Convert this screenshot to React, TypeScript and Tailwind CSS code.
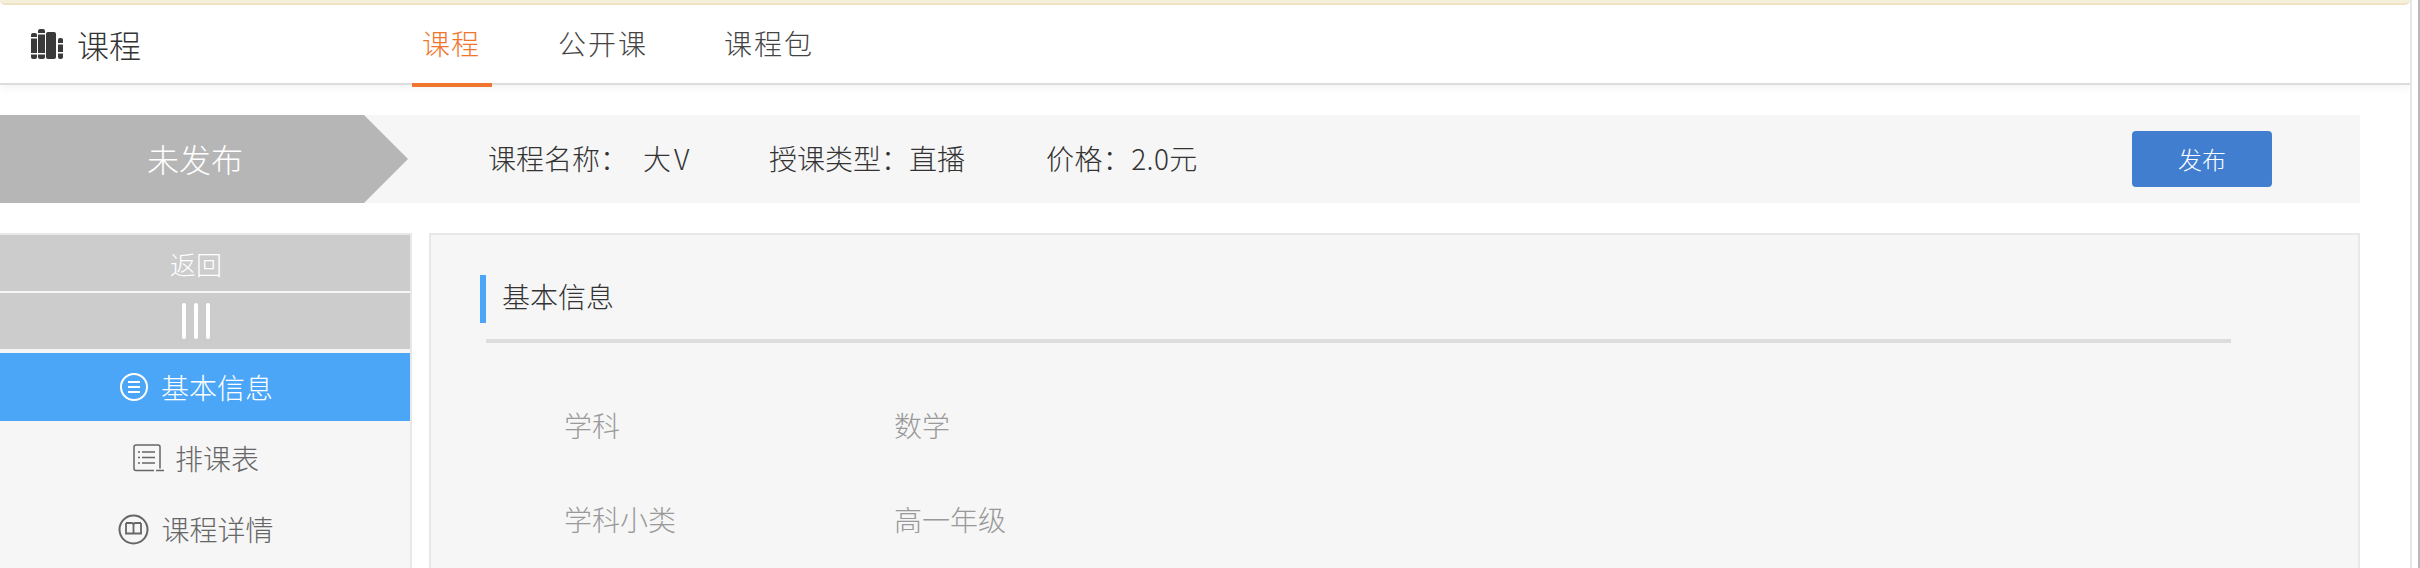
const cjk = "font-['Noto_Sans_CJK_SC','Liberation_Sans',sans-serif]";

const tabs = ["课程", "公开课", "课程包"];

function BooksIcon() {
  return (
    <svg width="34" height="32" viewBox="0 0 34 32" fill="#3a3a3a">
      <rect x="1" y="5" width="6" height="26" rx="2" />
      <rect x="8" y="1" width="7" height="30" rx="2" />
      <rect x="16" y="4" width="10" height="27" rx="2" />
      <rect x="28" y="10" width="5" height="21" rx="2" />
      <path d="M1 9h6v1.500H1zM1 25h6v1.500H1zM8 5h7v1.500H8zM8 25h7v1.500H8zM28 15h5v1.500h-5zM28 24h5v1.500h-5z" fill="#fff" />
    </svg>
  );
}

function ListCircleIcon() {
  return (
    <svg width="30" height="30" viewBox="0 0 30 30" fill="none" stroke="#fff" strokeWidth="2">
      <circle cx="15" cy="15" r="13" />
      <path d="M9 10h12M9 15h12M9 20h12" />
    </svg>
  );
}

function ScheduleIcon() {
  return (
    <svg width="32" height="28" viewBox="0 0 32 28" fill="none" stroke="#666" strokeWidth="1.500">
      <path d="M21 26.500H3a2 2 0 0 1-2-2V3a2 2 0 0 1 2-2h22a2 2 0 0 1 2 2v21.500" />
      <path d="M23 26.500h8" />
      <path d="M9 8h13M9 13.500h13M9 19h13" />
      <path d="M5 8h2M5 13.500h2M5 19h2" />
    </svg>
  );
}

function BookCircleIcon() {
  return (
    <svg width="31" height="31" viewBox="0 0 31 31" fill="none" stroke="#666">
      <circle cx="15.500" cy="15.500" r="14" strokeWidth="2" />
      <path d="M8 9h5.500a2 2 0 0 1 2 2v8M23 9h-5.500a2 2 0 0 0-2 2" strokeWidth="1.800" />
      <path d="M8 9v10.500h15V9" strokeWidth="1.800" />
    </svg>
  );
}

function InfoRow({ label, value }: { label: string; value: string }) {
  return (
    <div className="flex h-[94px] items-center text-[28px] text-[#999]">
      <span className="w-[330px]">{label}</span>
      <span>{value}</span>
    </div>
  );
}

export default function App() {
  return (
    <div className={`flex h-[568px] overflow-hidden bg-white font-light ${cjk}`}>
      <div className="w-[2410px] shrink-0">
        <div className="h-[5px] rounded-b-md border-b-2 border-[#efe3c4] bg-[#f5f0dc]" />

        {/* top nav */}
        <header className="flex h-[80px] border-b-2 border-[#dddddd] bg-white shadow-[0_4px_8px_rgba(0,0,0,0.04)]">
          <div className="flex w-[412px] items-center pl-[30px]">
            <BooksIcon />
            <span className="ml-[13px] text-[32px] leading-none text-[#333]">课程</span>
          </div>
          <nav className="flex">
            {tabs.map((tab, i) => (
              <div
                key={tab}
                className={
                  i === 0
                    ? "mb-[-4px] flex h-[82px] w-[80px] items-center justify-center border-b-4 border-[#f0762e] pr-[2px] pb-[2px] text-[28px] tracking-[1px] text-[#f0762e]"
                    : "ml-[66px] mr-[10px] flex h-[78px] items-center pb-[2px] text-[28px] tracking-[2px] text-[#444]"
                }
              >
                {tab}
              </div>
            ))}
          </nav>
        </header>

        {/* status bar */}
        <div className="mt-[30px] flex h-[88px] w-[2360px] items-center bg-[#f6f6f6]">
          <div className="flex h-full w-[408px] items-center justify-center bg-[#b6b6b6] pr-[18px] pb-[2px] text-[32px] text-white [clip-path:polygon(0_0,364px_0,100%_50%,364px_100%,0_100%)]">
            未发布
          </div>
          <div className="ml-[80px] flex flex-1 items-center pb-[2px] text-[28px] text-[#333]">
            <span className="w-[281px]">
              课程名称：
              <span className="ml-[15px] tracking-[3px]">大V</span>
            </span>
            <span className="w-[277px]">授课类型：直播</span>
            <span className="tracking-[0.4px]">价格：2.0元</span>
          </div>
          <button className="mr-[88px] h-[56px] w-[140px] rounded-[4px] bg-[#417ed0] text-[24px] text-white">
            发布
          </button>
        </div>

        <div className="mt-[30px] flex w-[2360px] gap-[17px]">
          {/* side menu */}
          <aside className="h-[400px] w-[412px] shrink-0 border-t-2 border-r-2 border-[#e8e8e8] bg-[#f6f6f6]">
            <div className="flex h-[56px] items-center justify-center bg-[#cccccc] pr-[18px] text-[26px] text-white">返回</div>
            <div className="mt-[2px] flex h-[56px] items-center justify-center gap-[8px] bg-[#cccccc] pr-[18px]">
              <i className="h-[36px] w-[4px] rounded-full bg-white" />
              <i className="h-[36px] w-[4px] rounded-full bg-white" />
              <i className="h-[36px] w-[4px] rounded-full bg-white" />
            </div>
            <div className="mt-[4px] flex h-[68px] items-center justify-center gap-[12px] bg-[#4ba6f8] pr-[18px] text-[28px] text-white">
              <ListCircleIcon />
              基本信息
            </div>
            <div className="flex h-[74px] items-center justify-center gap-[10px] pr-[18px] text-[28px] text-[#666]">
              <ScheduleIcon />
              排课表
            </div>
            <div className="flex h-[68px] items-center justify-center gap-[12px] pr-[18px] text-[28px] text-[#666]">
              <BookCircleIcon />
              课程详情
            </div>
          </aside>

          {/* main panel */}
          <section className="h-[400px] flex-1 border-x-2 border-t-2 border-[#e8e8e8] bg-[#f6f6f6] pt-[40px] pl-[49px]">
            <div className="flex h-[48px] items-center border-l-[6px] border-[#4ba6f8] pb-[7px] pl-[16px] text-[28px] text-[#333]">
              基本信息
            </div>
            <div className="mt-[16px] ml-[6px] h-[4px] w-[1745px] bg-[#dddddd]" />
            <div className="mt-[35px] ml-[84px]">
              <InfoRow label="学科" value="数学" />
              <InfoRow label="学科小类" value="高一年级" />
            </div>
          </section>
        </div>
      </div>

      {/* scrollbar track */}
      <div className="w-[10px] shrink-0 border-l-2 border-[#e6e6e6] bg-white">
        <div className="ml-auto h-full w-[2px] bg-[#b8b8b8]" />
      </div>
    </div>
  );
}
